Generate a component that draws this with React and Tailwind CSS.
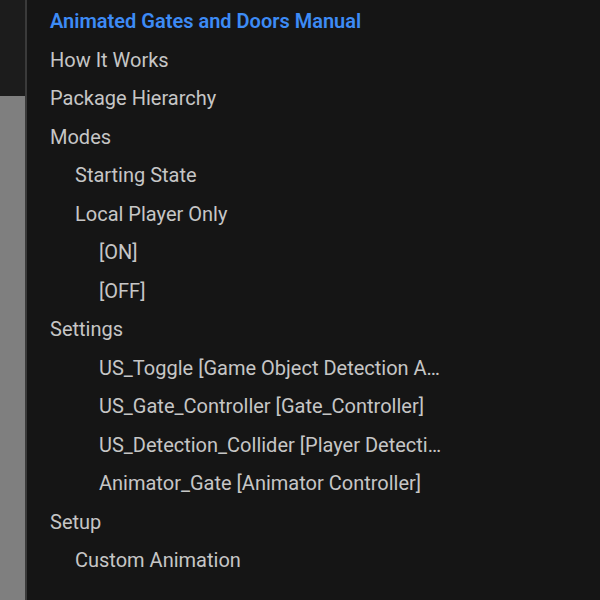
const items = [
  { label: 'Animated Gates and Doors Manual', level: 0, active: true },
  { label: 'How It Works', level: 0 },
  { label: 'Package Hierarchy', level: 0 },
  { label: 'Modes', level: 0 },
  { label: 'Starting State', level: 1 },
  { label: 'Local Player Only', level: 1 },
  { label: '[ON]', level: 2 },
  { label: '[OFF]', level: 2 },
  { label: 'Settings', level: 0 },
  { label: 'US_Toggle [Game Object Detection Area]', level: 2 },
  { label: 'US_Gate_Controller [Gate_Controller]', level: 2 },
  { label: 'US_Detection_Collider [Player Detection Collider]', level: 2 },
  { label: 'Animator_Gate [Animator Controller]', level: 2 },
  { label: 'Setup', level: 0 },
  { label: 'Custom Animation', level: 1 },
];

const indent = ['pl-[23px]', 'pl-[48px]', 'pl-[72px]'];

export default function App() {
  return (
    <div className="flex h-[600px] w-[600px] overflow-hidden bg-[#151515] font-['Roboto',sans-serif]">
      <div className="flex w-[25px] shrink-0 flex-col">
        <div className="h-[96px] bg-[#1c1c1c]" />
        <div className="flex-1 bg-[#7f7f7f]" />
      </div>
      <div className="w-[2px] shrink-0 bg-[#3a3a3a]" />
      <nav className="flex flex-1 flex-col pt-[9px]">
        {items.map((it) => (
          <a
            key={it.label}
            title={it.label}
            className={`block h-[38.5px] w-[415px] truncate text-[20px] leading-[24px] ${indent[it.level]} ${
              it.active ? 'font-semibold text-[#3d8bf5]' : 'text-[#c6c6c6]'
            }`}
          >
            {it.label}
          </a>
        ))}
      </nav>
    </div>
  );
}
